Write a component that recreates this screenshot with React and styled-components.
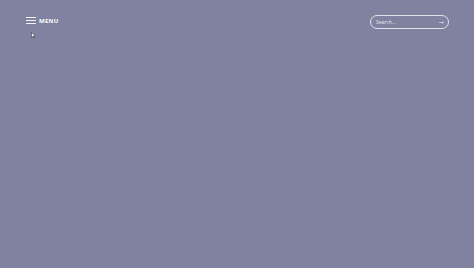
import React from 'react'
import styled, { createGlobalStyle } from 'styled-components'

const GlobalStyle = createGlobalStyle`
  html, body {
    margin: 0;
    padding: 0;
    height: 100%;
    background: #8082a0;
  }
  #root {
    height: 100%;
  }
`

const Page = styled.div`
  position: relative;
  height: 100vh;
  width: 100vw;
  background: #8082a0;
  font-family: "Open Sans", "Liberation Sans", sans-serif;
  overflow: hidden;
`

const Header = styled.header`
  display: flex;
  align-items: center;
  justify-content: space-between;
  padding: 15px 25px 0 26px;
`

const MenuButton = styled.div`
  display: flex;
  align-items: center;
  gap: 3px;
  color: #fff;
  margin-top: -3px;
`

const Burger = styled.div`
  display: flex;
  flex-direction: column;
  gap: 2px;
  width: 10px;

  span {
    display: block;
    height: 1px;
    background: rgba(255, 255, 255, 0.9);
  }
`

const MenuLabel = styled.span`
  font-size: 6px;
  font-weight: 700;
  letter-spacing: 0.3px;
  line-height: 1;
`

const SearchBox = styled.form`
  display: flex;
  align-items: center;
  justify-content: space-between;
  width: 79px;
  height: 14px;
  box-sizing: border-box;
  padding: 0 4px 0 5px;
  border: 1px solid rgba(255, 255, 255, 0.75);
  border-radius: 8px;
`

const SearchInput = styled.input`
  flex: 1;
  min-width: 0;
  border: none;
  outline: none;
  background: transparent;
  color: #fff;
  font-family: inherit;
  font-size: 5px;
  padding: 0;

  &::placeholder {
    color: rgba(255, 255, 255, 0.85);
  }
`

const Arrow = styled.svg`
  flex: none;
  display: block;
`

const Cursor = styled.svg`
  position: absolute;
  left: 31px;
  top: 32px;
`

const App = () => {
  return (
    <Page>
      <GlobalStyle />
      <Header>
        <MenuButton>
          <Burger>
            <span />
            <span />
            <span />
          </Burger>
          <MenuLabel>MENU</MenuLabel>
        </MenuButton>
        <SearchBox onSubmit={(e) => e.preventDefault()}>
          <SearchInput type="text" placeholder="Search..." />
          <Arrow width="5" height="3" viewBox="0 0 10 6">
            <path d="M0 3 H9 M6.5 0.8 L9 3 L6.5 5.2" fill="none" stroke="rgba(255,255,255,0.85)" strokeWidth="1.2" />
          </Arrow>
        </SearchBox>
      </Header>
      <Cursor width="5" height="7" viewBox="0 0 10 14">
        <path d="M1 1 L1 11 L3.5 8.5 L5.5 13 L7 12.3 L5 8 L8.5 8 Z" fill="#fff" stroke="#222" strokeWidth="1" />
      </Cursor>
    </Page>
  )
}

export default App
